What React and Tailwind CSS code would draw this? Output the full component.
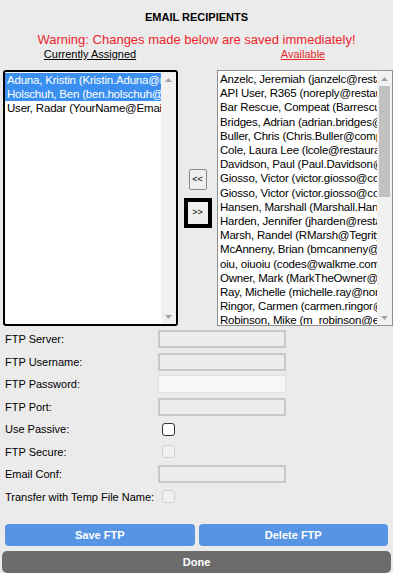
import React from 'react';

const assigned = [
    { label: 'Aduna, Kristin (Kristin.Aduna@restaurant365.net)', selected: true },
    { label: 'Holschuh, Ben (ben.holschuh@restaurant365.net)', selected: true },
    { label: 'User, Radar (YourName@EmailAddress.com)', selected: false },
];

const available = [
    'Anzelc, Jeremiah (janzelc@restaurant365.net)',
    'API User, R365 (noreply@restaurant365.net)',
    'Bar Rescue, Compeat (Barrescue@compeat.com)',
    'Bridges, Adrian (adrian.bridges@compeat.com)',
    'Buller, Chris (Chris.Buller@compeat.com)',
    'Cole, Laura Lee (lcole@restaurant365.net)',
    'Davidson, Paul (Paul.Davidson@compeat.com)',
    'Giosso, Victor (victor.giosso@compeat.com)',
    'Giosso, Victor (victor.giosso@compeat.com)',
    'Hansen, Marshall (Marshall.Hansen@compeat.com)',
    'Harden, Jennifer (jharden@restaurant365.net)',
    'Marsh, Randel (RMarsh@Tegrity.com)',
    'McAnneny, Brian (bmcanneny@compeat.com)',
    'oiu, oiuoiu (codes@walkme.com)',
    'Owner, Mark (MarkTheOwner@compeat.com)',
    'Ray, Michelle (michelle.ray@noreply.com)',
    'Ringor, Carmen (carmen.ringor@compeat.com)',
    'Robinson, Mike (m_robinson@example.com)',
];

const fields = [
    { label: 'FTP Server:', kind: 'input' },
    { label: 'FTP Username:', kind: 'input' },
    { label: 'FTP Password:', kind: 'password' },
    { label: 'FTP Port:', kind: 'input' },
    { label: 'Use Passive:', kind: 'check' },
    { label: 'FTP Secure:', kind: 'checkOff' },
    { label: 'Email Conf:', kind: 'input' },
    { label: 'Transfer with Temp File Name:', kind: 'checkOff' },
];

const Arrow = ({ up }) => (
    <svg width="7" height="4" viewBox="0 0 7 4" className="block">
        <path d={up ? 'M0 4 L3.5 0 L7 4 Z' : 'M0 0 L3.5 4 L7 0 Z'} fill="#a3a3a3" />
    </svg>
);

const Scrollbar = ({ thumb }) => (
    <div className="flex w-[15px] shrink-0 flex-col items-center bg-[#f1f1f1]">
        <div className="flex h-[15px] items-center justify-center"><Arrow up /></div>
        <div className="w-full flex-1 px-[2px]">
            {thumb ? <div className="h-[111px] w-full bg-[#c1c1c1]" /> : null}
        </div>
        <div className="flex h-[15px] items-center justify-center"><Arrow /></div>
    </div>
);

const FieldControl = ({ kind }) => {
    if (kind === 'check') {
        return <div className="ml-1 h-[13px] w-[13px] rounded-[3px] border border-[#333] bg-white" />;
    }
    if (kind === 'checkOff') {
        return <div className="ml-1 h-[13px] w-[13px] rounded-[3px] border border-[#d2d2d2] bg-[#f0f0f0]" />;
    }
    if (kind === 'password') {
        return <div className="h-[18px] w-[128px] border border-[#e0e0e0] bg-[#f7f7f7]" />;
    }
    return <div className="h-[18px] w-[128px] border-2 border-[#c8c8c8] bg-[#ececec]" />;
};

export default function App() {
    return (
        <div
            className="h-[573px] w-[396px] overflow-hidden border-r-[3px] border-white bg-[#ebebeb] text-black"
            style={{ fontFamily: '"Liberation Sans", Arial, sans-serif' }}
        >
            <div className="pt-[11px] text-center text-[11px] font-bold leading-[13px]">EMAIL RECIPIENTS</div>
            <div className="mt-[8px] text-center text-[13px] leading-[16px] text-[#f0262b]">
                Warning: Changes made below are saved immediately!
            </div>
            <div className="flex text-[11px] leading-[13px]">
                <div className="w-[180px] text-center underline">Currently Assigned</div>
                <div className="w-[33px]" />
                <div className="flex-1 text-center text-[#e62a2a] underline">Available</div>
            </div>

            <div className="mt-[9px] flex items-center pl-[3px]">
                <div className="flex h-[256px] w-[175px] overflow-hidden rounded-[3px] border-2 border-black bg-white">
                    <div className="min-w-0 flex-1 pt-[1px] text-[11.5px] leading-[14.2px] tracking-[-0.2px]">
                        {assigned.map((item) => (
                            <div
                                key={item.label}
                                className={`overflow-hidden whitespace-nowrap pl-[2px] ${item.selected ? 'bg-[#3b8ff0] text-white' : ''}`}
                            >
                                {item.label}
                            </div>
                        ))}
                    </div>
                    <Scrollbar />
                </div>

                <div className="flex w-[39px] flex-col items-center gap-[8px]">
                    <button
                        type="button"
                        className="flex h-[21px] w-[18px] items-center justify-center rounded-[2px] border border-[#8a8a8a] bg-[#efefef] text-[9px] leading-none"
                    >
                        &lt;&lt;
                    </button>
                    <div className="bg-black p-[4px]">
                        <button
                            type="button"
                            className="flex h-[22px] w-[20px] items-center justify-center bg-[#efefef] text-[9px] leading-none"
                        >
                            &gt;&gt;
                        </button>
                    </div>
                </div>

                <div className="flex h-[256px] w-[176px] overflow-hidden border border-[#8f8f8f] bg-white">
                    <div className="min-w-0 flex-1 pt-[1px] text-[11.5px] leading-[14.2px] tracking-[-0.2px]">
                        {available.map((name, i) => (
                            <div key={`${name}-${i}`} className="overflow-hidden whitespace-nowrap pl-[2px]">
                                {name}
                            </div>
                        ))}
                    </div>
                    <Scrollbar thumb />
                </div>
            </div>

            <div className="mt-[2px] flex flex-col text-[11px]">
                {fields.map((field) => (
                    <div key={field.label} className="flex h-[22.5px] items-center pl-[5px]">
                        <div className="w-[153px] shrink-0 whitespace-nowrap">{field.label}</div>
                        <FieldControl kind={field.kind} />
                    </div>
                ))}
            </div>

            <div className="mt-[16px] flex gap-[4px] px-[5px]">
                <button type="button" className="h-[22px] flex-1 rounded-[4px] bg-[#5794e3] text-[11px] font-bold text-white">
                    Save FTP
                </button>
                <button type="button" className="h-[22px] flex-1 rounded-[4px] bg-[#5794e3] text-[11px] font-bold text-white">
                    Delete FTP
                </button>
            </div>
            <div className="mt-[3px] px-[2px]">
                <button type="button" className="h-[22px] w-full rounded-[5px] bg-[#6c6c6c] text-[11px] font-bold text-white">
                    Done
                </button>
            </div>
        </div>
    );
}
